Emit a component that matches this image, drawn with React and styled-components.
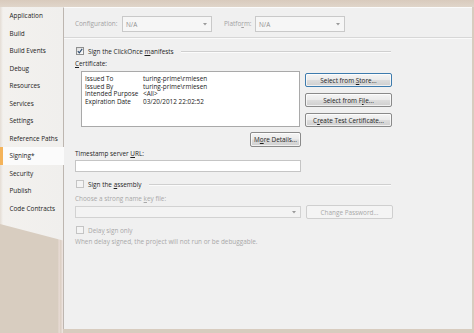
import React from "react";
import styled, { createGlobalStyle, css } from "styled-components";

const Global = createGlobalStyle`
  html, body { margin: 0; padding: 0; }
  body {
    width: 474px; height: 333px; overflow: hidden;
    background: #d8ccbf;
    font-family: "Open Sans", "Noto Sans", sans-serif;
    font-size: 6.4px;
    color: #1e1e1e;
  }
  #root { width: 474px; height: 333px; }
  u { text-decoration: underline; text-underline-offset: 1px; }
`;

const Frame = styled.div`
  display: flex;
  flex-direction: column;
  width: 474px;
  height: 333px;
`;

const TopStrip = styled.div`
  height: 7px;
  flex: none;
  background: linear-gradient(#d9cbbd, #e0d5ca);
`;

const Main = styled.div`
  flex: 1;
  display: flex;
  min-height: 0;
`;

const Sidebar = styled.div`
  width: 63px;
  flex: none;
  display: flex;
  flex-direction: column;
  background: linear-gradient(to right, #d8cdc0 58px, #e9dcd6 59px, #d9cdc1 61px, #ece2dd 62px);
`;

const TabList = styled.ul`
  list-style: none;
  margin: 0;
  padding: 0 0 24px 0;
  display: flex;
  flex-direction: column;
  background: linear-gradient(to right, #e4ddd5 0, #f3f1ee 3px, #f0efed 100%);
  clip-path: polygon(0 0, calc(100% + 2px) 0, calc(100% + 2px) 100%, 0 calc(100% - 17px));
`;

const Tab = styled.li`
  height: 17.5px;
  line-height: 17.5px;
  padding-left: 9.5px;
  white-space: nowrap;
  color: #222;
  ${(p) =>
    p.$active &&
    css`
      position: relative;
      z-index: 1;
      margin-right: -1px;
      background: #fbfbfb;
      box-shadow: inset 3px 0 0 #f4b35a;
    `}
`;

const Content = styled.div`
  flex: 1;
  margin: 0 2px 4px 0;
  background: #f0f0f0;
  border-left: 1px solid #bdb6b0;
  border-top: 1px solid #fbfbfb;
  display: flex;
  flex-direction: column;
`;

const Toolbar = styled.div`
  height: 30px;
  box-sizing: border-box;
  padding: 8px 0 0 11px;
  display: flex;
  align-items: flex-start;
  border-bottom: 1px solid #d7d7d7;
  box-shadow: 0 1px 0 #fafafa;
`;

const ToolLabel = styled.span`
  color: #a2a2a2;
  line-height: 16px;
  width: ${(p) => p.$w}px;
  flex: none;
`;

const Combo = styled.div`
  width: ${(p) => p.$w}px;
  height: ${(p) => p.$h || 16}px;
  box-sizing: border-box;
  border: 1px solid ${(p) => (p.$dim ? "#d2d2d2" : "#c9c9c9")};
  background: ${(p) => (p.$dim ? "#f3f3f3" : "#f6f6f6")};
  display: flex;
  align-items: center;
  padding: 0 4px 0 3px;
  color: #8f8f8f;
  flex: none;
  margin-right: ${(p) => p.$mr || 0}px;
`;

const ComboText = styled.span`
  flex: 1;
`;

const Arrow = styled.svg`
  width: 4px;
  height: 3px;
  flex: none;
`;

const Body = styled.div`
  padding: 0 0 0 11px;
  display: flex;
  flex-direction: column;
`;

const GroupHeader = styled.div`
  width: 316px;
  height: 10px;
  display: flex;
  align-items: center;
  margin-top: ${(p) => p.$mt}px;
  color: ${(p) => (p.$dim ? "#a5a5a5" : "#1e1e1e")};
  white-space: nowrap;
  &::after {
    content: "";
    flex: 1;
    height: 1px;
    background: #cfcfcf;
    margin-left: 7px;
    box-shadow: 0 1px 0 #fbfbfb;
  }
`;

const CheckRow = styled.div`
  height: 10px;
  display: flex;
  align-items: center;
  margin-top: ${(p) => p.$mt}px;
  color: ${(p) => (p.$dim ? "#a8a8a8" : "#1e1e1e")};
  white-space: nowrap;
`;

const Box = styled.span`
  width: 6px;
  height: 6px;
  flex: none;
  margin: 0 4px 0 1px;
  border: 1px solid ${(p) => (p.$dim ? "#c4c4c4" : "#8e8f8f")};
  background: ${(p) => (p.$dim ? "#f4f4f4" : "linear-gradient(135deg,#dcdcdc,#fdfdfd)")};
  display: flex;
  align-items: center;
  justify-content: center;
`;

const Label = styled.div`
  height: 10px;
  line-height: 10px;
  margin-top: ${(p) => p.$mt}px;
  color: ${(p) => (p.$dim ? "#a8a8a8" : "#1e1e1e")};
  white-space: nowrap;
`;

const CertRow = styled.div`
  display: flex;
  margin-top: 2px;
  padding-left: 6px;
  gap: 5px;
`;

const CertBox = styled.div`
  width: 219px;
  height: 56px;
  box-sizing: border-box;
  background: #fff;
  border: 1px solid #a9a9a9;
  padding: 3px 0 0 3px;
  display: grid;
  grid-template-columns: 58px 1fr;
  grid-auto-rows: 7.6px;
  line-height: 7.6px;
  align-content: start;
`;

const Cell = styled.span`
  white-space: nowrap;
  color: #222;
`;

const ButtonCol = styled.div`
  display: flex;
  flex-direction: column;
  gap: 6px;
  padding-top: 2px;
`;

const Button = styled.div`
  width: ${(p) => p.$w || 87}px;
  height: ${(p) => p.$h || 14}px;
  box-sizing: border-box;
  border: 1px solid ${(p) => (p.$focus ? "#3d7bad" : p.$dim ? "#cfcfcf" : "#8a8a8a")};
  border-radius: 2px;
  background: ${(p) =>
    p.$dim ? "#f4f4f4" : "linear-gradient(#f4f4f4 0%, #ebebeb 48%, #dddddd 52%, #cfcfcf 100%)"};
  box-shadow: ${(p) => (p.$dim ? "none" : "inset 0 0 0 1px rgba(255,255,255,0.7)")};
  display: flex;
  align-items: center;
  justify-content: center;
  color: ${(p) => (p.$dim ? "#a8a8a8" : "#1e1e1e")};
  white-space: nowrap;
  flex: none;
`;

const DetailsRow = styled.div`
  width: 226px;
  display: flex;
  justify-content: flex-end;
  margin-top: 5px;
  height: 15px;
`;

const TextBox = styled.div`
  width: 226px;
  height: 12px;
  box-sizing: border-box;
  margin-top: 1px;
  background: #fff;
  border: 1px solid #c5c5c5;
`;

const KeyRow = styled.div`
  display: flex;
  align-items: center;
  gap: 5px;
  margin-top: 1px;
  height: 14px;
`;

const Check = () => (
  <svg width="6" height="6" viewBox="0 0 6 6">
    <path d="M0.8 3.2 L2.3 4.8 L5.2 0.9" fill="none" stroke="#2c4a6e" strokeWidth="1.1" />
  </svg>
);

const DownArrow = () => (
  <Arrow viewBox="0 0 4 3">
    <path d="M0 0 H4 L2 2.6 Z" fill="#9a9a9a" />
  </Arrow>
);

const tabs = [
  "Application",
  "Build",
  "Build Events",
  "Debug",
  "Resources",
  "Services",
  "Settings",
  "Reference Paths",
  "Signing*",
  "Security",
  "Publish",
  "Code Contracts",
];

const certRows = [
  ["Issued To", "turing-prime\\rmiesen"],
  ["Issued By", "turing-prime\\rmiesen"],
  ["Intended Purpose", "<All>"],
  ["Expiration Date", "03/20/2012 22:02:52"],
];

export default function App() {
  return (
    <>
      <Global />
      <Frame>
        <TopStrip />
        <Main>
          <Sidebar>
            <TabList>
              {tabs.map((t) => (
                <Tab key={t} $active={t === "Signing*"}>
                  {t}
                </Tab>
              ))}
            </TabList>
          </Sidebar>
          <Content>
            <Toolbar>
              <ToolLabel $w={47}>Configuration:</ToolLabel>
              <Combo $w={90} $mr={12}>
                <ComboText>N/A</ComboText>
                <DownArrow />
              </Combo>
              <ToolLabel $w={31}>
                Platfo<u>r</u>m:
              </ToolLabel>
              <Combo $w={90}>
                <ComboText>N/A</ComboText>
                <DownArrow />
              </Combo>
            </Toolbar>
            <Body>
              <GroupHeader $mt={8}>
                <Box>
                  <Check />
                </Box>
                <span>
                  Sign the ClickOnce <u>m</u>anifests
                </span>
              </GroupHeader>
              <Label $mt={3}>
                <u>C</u>ertificate:
              </Label>
              <CertRow>
                <CertBox>
                  {certRows.map(([k, v]) => (
                    <React.Fragment key={k}>
                      <Cell>{k}</Cell>
                      <Cell>{v}</Cell>
                    </React.Fragment>
                  ))}
                </CertBox>
                <ButtonCol>
                  <Button $focus>
                    <span>
                      Select from <u>S</u>tore...
                    </span>
                  </Button>
                  <Button>
                    <span>
                      Select from F<u>i</u>le...
                    </span>
                  </Button>
                  <Button>
                    <span>
                      C<u>r</u>eate Test Certificate...
                    </span>
                  </Button>
                </ButtonCol>
              </CertRow>
              <DetailsRow>
                <Button $w={51} $h={15}>
                  <span>
                    M<u>o</u>re Details...
                  </span>
                </Button>
              </DetailsRow>
              <Label $mt={2}>
                Timestamp server <u>U</u>RL:
              </Label>
              <TextBox />
              <GroupHeader $mt={7}>
                <Box $dim />
                <span>
                  Sign the <u>a</u>ssembly
                </span>
              </GroupHeader>
              <Label $mt={5} $dim>
                Choose a strong name <u>k</u>ey file:
              </Label>
              <KeyRow>
                <Combo $w={226} $h={12} $dim>
                  <ComboText />
                  <DownArrow />
                </Combo>
                <Button $dim>
                  <span>Change Password...</span>
                </Button>
              </KeyRow>
              <CheckRow $mt={6} $dim>
                <Box $dim />
                <span>
                  Dela<u>y</u> sign only
                </span>
              </CheckRow>
              <Label $mt={2} $dim>
                When delay signed, the project will not run or be debuggable.
              </Label>
            </Body>
          </Content>
        </Main>
      </Frame>
    </>
  );
}
